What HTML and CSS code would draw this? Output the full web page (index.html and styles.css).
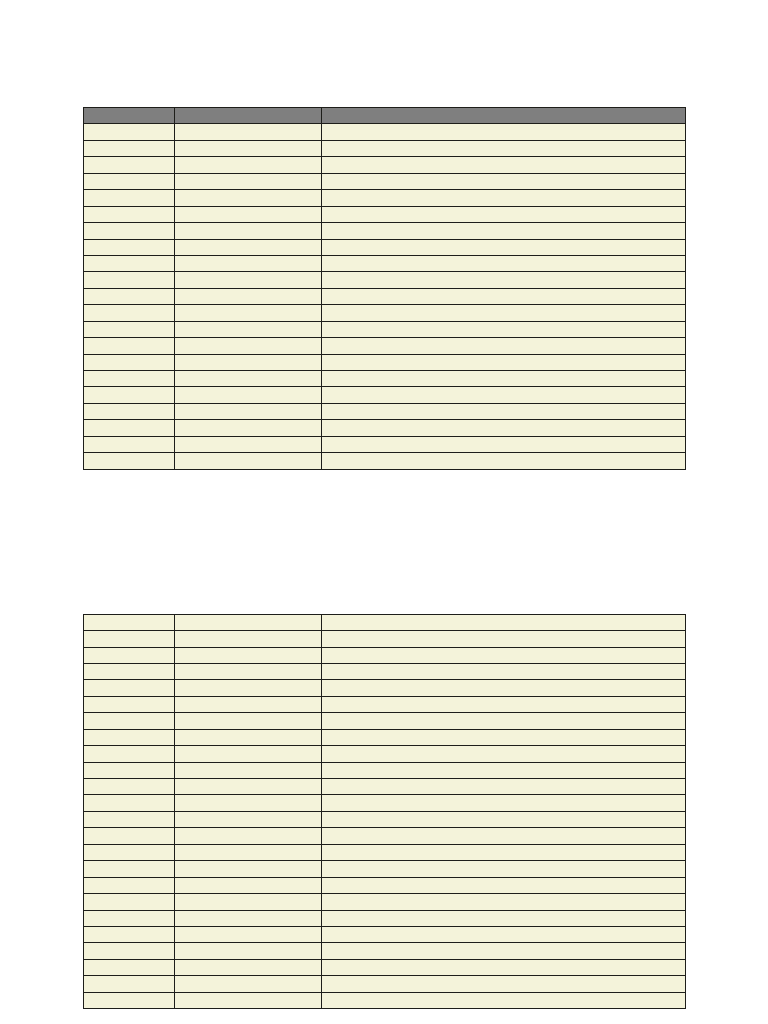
FILE: index.html
```html
<!DOCTYPE html>
<html>
<head>
<meta charset="utf-8">
<link rel="stylesheet" href="styles.css">
</head>
<body>
<main class="page">
<table class="grid grid-first">
<thead><tr><th class="c1"></th><th class="c2"></th><th class="c3"></th></tr></thead>
<tbody>
<tr><td></td><td></td><td></td></tr>
<tr><td></td><td></td><td></td></tr>
<tr><td></td><td></td><td></td></tr>
<tr><td></td><td></td><td></td></tr>
<tr><td></td><td></td><td></td></tr>
<tr><td></td><td></td><td></td></tr>
<tr><td></td><td></td><td></td></tr>
<tr><td></td><td></td><td></td></tr>
<tr><td></td><td></td><td></td></tr>
<tr><td></td><td></td><td></td></tr>
<tr><td></td><td></td><td></td></tr>
<tr><td></td><td></td><td></td></tr>
<tr><td></td><td></td><td></td></tr>
<tr><td></td><td></td><td></td></tr>
<tr><td></td><td></td><td></td></tr>
<tr><td></td><td></td><td></td></tr>
<tr><td></td><td></td><td></td></tr>
<tr><td></td><td></td><td></td></tr>
<tr><td></td><td></td><td></td></tr>
<tr><td></td><td></td><td></td></tr>
<tr><td></td><td></td><td></td></tr>
</tbody>
</table>
<table class="grid grid-second">
<colgroup><col class="c1"><col class="c2"><col class="c3"></colgroup>
<tbody>
<tr><td></td><td></td><td></td></tr>
<tr><td></td><td></td><td></td></tr>
<tr><td></td><td></td><td></td></tr>
<tr><td></td><td></td><td></td></tr>
<tr><td></td><td></td><td></td></tr>
<tr><td></td><td></td><td></td></tr>
<tr><td></td><td></td><td></td></tr>
<tr><td></td><td></td><td></td></tr>
<tr><td></td><td></td><td></td></tr>
<tr><td></td><td></td><td></td></tr>
<tr><td></td><td></td><td></td></tr>
<tr><td></td><td></td><td></td></tr>
<tr><td></td><td></td><td></td></tr>
<tr><td></td><td></td><td></td></tr>
<tr><td></td><td></td><td></td></tr>
<tr><td></td><td></td><td></td></tr>
<tr><td></td><td></td><td></td></tr>
<tr><td></td><td></td><td></td></tr>
<tr><td></td><td></td><td></td></tr>
<tr><td></td><td></td><td></td></tr>
<tr><td></td><td></td><td></td></tr>
<tr><td></td><td></td><td></td></tr>
<tr><td></td><td></td><td></td></tr>
<tr><td></td><td></td><td></td></tr>
</tbody>
</table>
</main>
</body>
</html>
```
FILE: styles.css
```css
html, body {
  margin: 0;
  padding: 0;
  background: #ffffff;
  font-family: "Liberation Sans", Arial, sans-serif;
}
.page {
  width: 602px;
  margin: 0 auto;
  padding-top: 107px;
  display: flex;
  flex-direction: column;
  gap: 144px;
}
.grid {
  width: 602px;
  border-collapse: collapse;
  table-layout: fixed;
}
.grid th,
.grid td {
  border: 1px solid #1e1e1a;
  padding: 0;
  height: 16.45px;
  box-sizing: border-box;
  background: #f4f3da;
}
.grid th {
  background: #7f7f7f;
}
.c1 { width: 91px; }
.c2 { width: 147px; }
.c3 { width: 364px; }
```
